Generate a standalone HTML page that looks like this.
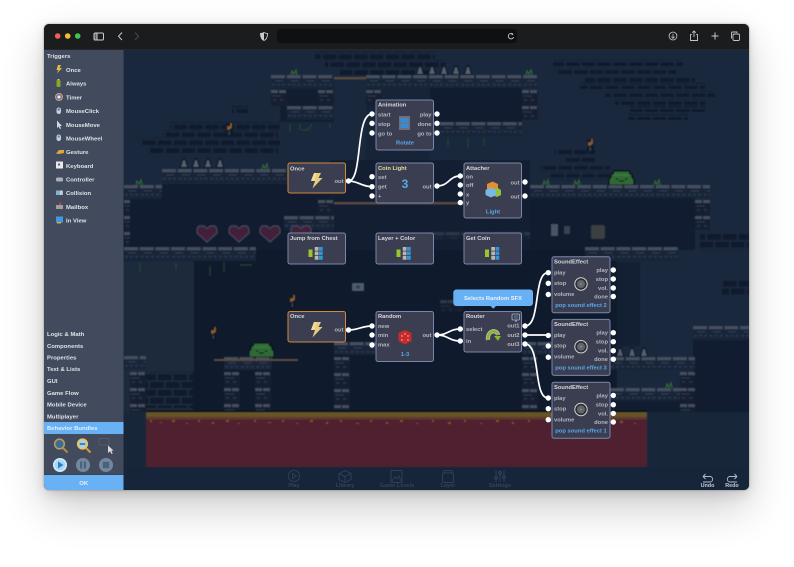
<!DOCTYPE html>
<html><head><meta charset="utf-8"><style>
html,body{margin:0;padding:0;background:#fff;width:794px;height:567px;overflow:hidden}
#w{position:absolute;left:44px;top:24px;width:705px;height:466px;border-radius:5px;box-shadow:0 18px 42px rgba(0,0,0,.2),0 4px 12px rgba(0,0,0,.12),0 0 2px rgba(0,0,0,.35)}
svg{position:absolute;left:0;top:0;filter:blur(.28px)}
#bg{filter:blur(.55px)}
text{font-family:"Liberation Sans",sans-serif;font-weight:700;font-size:5.8px;letter-spacing:0}
.s{fill:#dfe2e8;font-size:5.9px;letter-spacing:.03px}
.t{fill:#d6d8dd}
.p{fill:#b3b7c2}
.b{fill:#5aa9ec;text-anchor:middle}
.r{text-anchor:end}
.d{fill:#33435a;text-anchor:middle;font-size:5.6px}
.w{fill:none;stroke:#fff;stroke-width:1.7;stroke-linecap:round}
.n{fill:#3a3e50;stroke:#7b87aa;stroke-width:1}
.o{fill:#3a3e50;stroke:#d08a3c;stroke-width:1}
.i{fill:none;stroke:#c9ced6;stroke-width:1}
.m{fill:none;stroke:#2f3e55;stroke-width:1}
</style></head><body>
<div id="w"></div>
<svg width="794" height="567" viewBox="0 0 794 567">
<defs>
<clipPath id="win"><path d="M44 29a5 5 0 0 1 5-5H744a5 5 0 0 1 5 5V485a5 5 0 0 1-5 5H49a5 5 0 0 1-5-5Z"/></clipPath>
<pattern id="plat" width="15.7" height="14" patternUnits="userSpaceOnUse">
<rect width="15.7" height="14" fill="#182438"/>
<rect x="0" y="0" width="14" height="3.4" fill="#454e5e"/>
<rect x="4" y="5.4" width="8" height="1" fill="#374356"/>
<rect x="1" y="8.5" width="3" height="2.4" fill="#263348"/><rect x="6" y="8.5" width="3" height="2.4" fill="#263348"/><rect x="11" y="8.5" width="3" height="2.4" fill="#263348"/>
</pattern>
<pattern id="col" width="16" height="16" patternUnits="userSpaceOnUse">
<rect width="16" height="16" fill="#151f31"/>
<rect x="0" y="0" width="7" height="3.2" fill="#454e5e"/><rect x="8" y="0" width="7" height="3.2" fill="#454e5e"/>
<rect x="1" y="5.5" width="9" height="1" fill="#323e52"/>
<rect x="2" y="9" width="3" height="2" fill="#263348"/><rect x="9" y="9" width="3" height="2" fill="#263348"/>
</pattern>
<pattern id="wall" width="31.4" height="15.6" patternUnits="userSpaceOnUse">
<rect x="1" y="0" width="13.4" height="5.8" fill="#0f1a2c"/><rect x="16.7" y="0" width="13.4" height="5.8" fill="#0f1a2c"/>
<rect x="9" y="7.8" width="13.4" height="5.8" fill="#0f1a2c"/><rect x="24.7" y="7.8" width="6.7" height="5.8" fill="#0f1a2c"/><rect x="0" y="7.8" width="6.7" height="5.8" fill="#0f1a2c"/>
</pattern>
<g id="spike"><path d="M0 11 L1.5 8 L3.5 1 L6.5 1 L8.5 8 L10 11Z" fill="#111a2a"/><path d="M2 10 L4.2 3 L5.8 3 L8 10Z" fill="#565f6e"/></g>
<g id="bolt"><path d="M4.5 0H11.5L9 5H13L3 15.500L5.500 8H1.500Z" fill="#e6cd7e"/><path d="M5 8H1.500L4.500 0H7Z" fill="#efdc9c"/></g>
<g id="bun"><rect x="0" y="2" width="3.200" height="6" fill="#9ac62c"/><rect x="5" y="0" width="3" height="3" fill="#b9b6ad"/><rect x="5" y="3.600" width="3" height="3" fill="#b9b6ad"/><rect x="5" y="7.200" width="3" height="3" fill="#b9b6ad"/><rect x="8.400" y="0" width="3" height="3" fill="#2f95d8"/><rect x="8.400" y="3.600" width="3" height="3" fill="#2f95d8"/><rect x="8.400" y="7.200" width="3" height="3" fill="#2f95d8"/></g>
<g id="spk"><circle r="6.200" fill="#2c2f38" stroke="#d5d3c8" stroke-width="1"/><circle r="4" fill="#62666c"/><circle r=".8" fill="#9a9da0"/></g>
<g id="slime"><path d="M0 16V10L2 8V5L5 3V1H22V3L25 5V8L27 10V16Z" fill="#0d1522"/><path d="M1.500 15.500V10.500L3.500 8.500V6L6 4.500V2.500H21V4.500L23.500 6V8.500L25.500 10.500V15.500Z" fill="#2f6a35"/><rect x="6" y="5" width="15" height="2" fill="#3a7840"/><rect x="8" y="9.500" width="2.400" height="1" fill="#0f2014"/><rect x="17" y="9.500" width="2.400" height="1" fill="#0f2014"/><rect x="11" y="11.500" width="5" height="1" fill="#0f2014"/></g>
<g id="torch"><rect x="-3" y="-5" width="7" height="14" fill="#0f1828" opacity=".8"/><path d="M-2-2 1-2 1-5 3-5 3 0 0 2-2 2Z" fill="#8a5a2a"/><rect x="-.5" y="3" width="1.500" height="4" fill="#3d4658"/></g>
<g id="heart"><path d="M-8-6H-3L0-3.500 3-6H8L10-3V1L0 10-10 1V-3Z" fill="#43203a" stroke="#43475a" stroke-width="1.400"/></g>
<g id="grass"><path d="M0 5 1 1 3 4 5 0 6 5" fill="none" stroke="#2f6a33" stroke-width="1.200"/></g>
</defs>

<g clip-path="url(#win)">
<rect x="44" y="24" width="705" height="466" fill="#1a283d"/>
<g id="bg">
<rect x="110" y="40" width="660" height="470" fill="#1a283d"/>
<path d="M124 198H162V184H330V250H110V198Z" fill="#111c30"/>
<path d="M193 250H617V412H193Z" fill="#0f1a2d"/>
<path d="M330 160H530V250H330Z" fill="#131e32"/>
<path d="M530 198H695V250H530Z" fill="#111c30"/>
<path d="M280 88H334V122H280Z" fill="#121d31"/>
<path d="M430 86H522V122H430Z" fill="#111c30"/>
<path d="M366 88H430V160H366Z" fill="#162338"/>
<path d="M693 340H770V412H693Z" fill="#111c30"/>
<path d="M617 262H640V346H617Z" fill="#131f33"/>
<path d="M110 370H146V412H110Z" fill="#111c30"/>
<path d="M610 400H693V412H610Z" fill="#111c30"/>
<rect x="110" y="262" width="84" height="150" fill="#1c2a3c"/>
<rect x="110" y="412" width="660" height="55" fill="#18263a"/>
<rect x="110" y="467" width="660" height="43" fill="#17253a"/>
<rect x="193" y="250" width="60" height="12" fill="#0f1a2d"/>
<g fill="url(#wall)">
<rect x="232" y="106" width="16" height="7"/>
<rect x="170" y="122" width="110" height="7"/><rect x="163" y="130" width="115" height="7"/><rect x="140" y="138" width="140" height="7"/><rect x="148" y="146" width="130" height="7"/>
<rect x="315" y="52" width="120" height="7"/><rect x="325" y="60" width="120" height="7"/><rect x="340" y="68" width="90" height="7"/>
<rect x="553" y="60" width="130" height="6"/><rect x="556" y="68" width="120" height="6"/><rect x="585" y="76" width="110" height="6"/><rect x="580" y="83" width="125" height="6"/><rect x="605" y="91" width="110" height="6"/><rect x="615" y="99" width="90" height="6"/><rect x="630" y="106" width="75" height="6"/><rect x="628" y="114" width="60" height="6"/>
<rect x="555" y="150" width="40" height="6"/><rect x="565" y="158" width="30" height="6"/><rect x="540" y="166" width="70" height="6"/><rect x="550" y="174" width="60" height="6"/>
<rect x="145" y="372" width="50" height="36"/>
<rect x="700" y="232" width="49" height="18"/><rect x="722" y="280" width="27" height="16"/>
</g>
<rect x="193" y="372" width="30" height="38" fill="#0f1a2d"/>
<rect transform="translate(271 75)" width="63" height="14" fill="url(#plat)"/>
<rect transform="translate(271 90)" width="16" height="16" fill="url(#col)"/>
<rect transform="translate(318 90)" width="16" height="16" fill="url(#col)"/>
<rect transform="translate(287 106)" width="47" height="14" fill="url(#plat)"/>
<rect transform="translate(366 75)" width="172" height="13" fill="url(#plat)"/>
<rect transform="translate(366 90)" width="16" height="16" fill="url(#col)"/>
<rect transform="translate(522 90)" width="16" height="30" fill="url(#col)"/>
<rect transform="translate(440 122)" width="82" height="14" fill="url(#plat)"/>
<rect transform="translate(162 169)" width="125" height="14" fill="url(#plat)"/>
<rect transform="translate(124 185)" width="38" height="14" fill="url(#plat)"/>
<rect transform="translate(124 200)" width="6" height="48" fill="url(#col)"/>
<rect transform="translate(318 200)" width="16" height="32" fill="url(#col)"/>
<rect transform="translate(284 216)" width="50" height="14" fill="url(#plat)"/>
<rect transform="translate(530 185)" width="180" height="13" fill="url(#plat)"/>
<rect transform="translate(695 200)" width="15" height="30" fill="url(#col)"/>
<rect transform="translate(124 247)" width="132" height="14" fill="url(#plat)"/>
<rect transform="translate(585 247)" width="94" height="14" fill="url(#plat)"/>
<rect transform="translate(693 326)" width="56" height="14" fill="url(#plat)"/>
<rect transform="translate(610 357)" width="85" height="13" fill="url(#plat)"/>
<rect transform="translate(610 388)" width="70" height="13" fill="url(#plat)"/>
<rect transform="translate(680 372)" width="15" height="40" fill="url(#col)"/>
<rect transform="translate(124 356)" width="22" height="13" fill="url(#plat)"/>
<rect transform="translate(130 372)" width="16" height="40" fill="url(#col)"/>
<rect transform="translate(224 357)" width="48" height="13" fill="url(#plat)"/>
<rect transform="translate(224 372)" width="16" height="40" fill="url(#col)"/>
<rect transform="translate(255 372)" width="16" height="40" fill="url(#col)"/>
<rect transform="translate(334 342)" width="42" height="13" fill="url(#plat)"/>
<rect transform="translate(334 357)" width="16" height="55" fill="url(#col)"/>
<rect transform="translate(522 342)" width="30" height="13" fill="url(#plat)"/>
<rect transform="translate(522 357)" width="16" height="55" fill="url(#col)"/>
<rect transform="translate(440 300)" width="24" height="12" fill="url(#col)" opacity=".6"/>
<rect transform="translate(430 232)" width="100" height="8" fill="url(#plat)" opacity=".5"/>
<rect x="334" y="77" width="32" height="2.400" fill="#5a4a3c"/>
<rect x="334" y="202" width="130" height="2.400" fill="#5c4c3e"/>
<rect x="214" y="359" width="84" height="2" fill="#5e4d3e"/>
<use href="#spike" x="179" y="157"/><use href="#spike" x="191" y="157"/><use href="#spike" x="203" y="157"/><use href="#spike" x="215" y="157"/>
<use href="#spike" x="415" y="64"/><use href="#spike" x="427" y="64"/><use href="#spike" x="439" y="64"/><use href="#spike" x="451" y="64"/><use href="#spike" x="463" y="64"/>
<use href="#spike" x="615" y="346"/><use href="#spike" x="627" y="346"/><use href="#spike" x="639" y="346"/>
<use href="#slime" x="608" y="169"/><use href="#slime" x="248" y="341"/>
<use href="#torch" x="229" y="128"/><use href="#torch" x="590" y="144"/><use href="#torch" x="292" y="300"/><use href="#torch" x="213" y="332"/>
<use href="#heart" x="207" y="232"/><use href="#heart" x="239" y="232"/><use href="#heart" x="270" y="232"/><use href="#heart" x="301" y="232"/>
<use href="#grass" x="291" y="70"/><use href="#grass" x="262" y="164"/><use href="#grass" x="136" y="180"/><use href="#grass" x="526" y="70"/><use href="#grass" x="543" y="180"/><use href="#grass" x="574" y="180"/><use href="#grass" x="654" y="180"/><use href="#grass" x="337" y="337"/><use href="#grass" x="666" y="383"/>
<path d="M290 124V132M300 124V130M312 124L308 130H302M330 124V128M448 138V146M468 138V148M484 138V146M140 263V272M176 263V270M210 266V276M224 262V272M240 265H252" stroke="#22492e" stroke-width="1.200" fill="none"/>
<rect x="551" y="224" width="7" height="12" fill="#4c5464"/><rect x="564" y="226" width="6" height="8" fill="#3a4252"/><rect x="591" y="225" width="14" height="14" rx="2" fill="#3c3f42"/>
<rect x="352" y="283" width="12" height="8" rx="1" fill="#4d5c6d"/><circle cx="358" cy="287" r="1.600" fill="#2a3a4e"/>
<path d="M466 232 L466 240 L472 244Z" fill="#394252"/>
<rect x="146" y="410.500" width="501" height="2" fill="#0b0f16"/>
<rect x="146" y="412" width="501" height="55" fill="#4f2130"/>
<rect x="146" y="412" width="501" height="5" fill="#665429"/>
<rect x="146" y="417" width="501" height="2.500" fill="#5d3a2c"/>
<g fill="#7a5a24"><rect x="150" y="420" width="2" height="2"/><rect x="160" y="422" width="2" height="1"/><rect x="172" y="420" width="3" height="2"/><rect x="186" y="423" width="2" height="1"/><rect x="198" y="420" width="2" height="2"/><rect x="212" y="422" width="2" height="2"/><rect x="226" y="420" width="3" height="2"/><rect x="238" y="423" width="2" height="1"/><rect x="254" y="420" width="2" height="2"/><rect x="268" y="422" width="3" height="1"/><rect x="282" y="420" width="2" height="2"/><rect x="296" y="423" width="2" height="1"/><rect x="310" y="420" width="3" height="2"/><rect x="326" y="422" width="2" height="2"/><rect x="340" y="420" width="2" height="2"/><rect x="356" y="423" width="3" height="1"/><rect x="370" y="420" width="2" height="2"/><rect x="386" y="422" width="2" height="2"/><rect x="400" y="420" width="3" height="2"/><rect x="416" y="423" width="2" height="1"/><rect x="432" y="420" width="2" height="2"/><rect x="448" y="422" width="3" height="2"/><rect x="464" y="420" width="2" height="2"/><rect x="480" y="423" width="2" height="1"/><rect x="496" y="420" width="3" height="2"/><rect x="512" y="422" width="2" height="2"/><rect x="528" y="420" width="2" height="2"/><rect x="620" y="421" width="3" height="2"/><rect x="634" y="423" width="2" height="1"/></g>
</g>
</g>

<path d="M44 50V29a5 5 0 0 1 5-5H744a5 5 0 0 1 5 5V50Z" fill="#1b1c1e"/>
<rect x="44" y="49.200" width="705" height="1" fill="#2a2c30"/>
<circle cx="57.700" cy="36" r="2.800" fill="#ee5f58"/><circle cx="67.700" cy="36" r="2.800" fill="#f7bb2f"/><circle cx="77.700" cy="36" r="2.800" fill="#3ac74a"/>
<rect x="94" y="33" width="9.500" height="7" rx="1.300" class="i" stroke-width=".9"/><path d="M97 33V40" class="i" stroke-width=".9"/><rect x="94.500" y="33.500" width="2.500" height="6" fill="#c9ced6" opacity=".4"/>
<path d="M122 32.500 118.500 36.300 122 40" class="i"/><path d="M135 32.500 138.500 36.300 135 40" fill="none" stroke="#4a4c50" stroke-width="1"/>
<path d="M264 32.500C262.500 33.300 261.300 33.500 260.500 33.500C260.500 37 261.500 39.500 264 40.500C266.500 39.500 267.500 37 267.500 33.500C266.700 33.500 265.500 33.300 264 32.500Z" fill="none" stroke="#c9ced6" stroke-width=".9"/><path d="M264 32.500V40.500C261.500 39.500 260.500 37 260.500 33.500C261.300 33.500 262.500 33.300 264 32.500Z" fill="#c9ced6"/>
<rect x="277" y="29" width="240" height="14" rx="3" fill="#0f1011"/>
<path d="M513 34.300A2.700 2.700 0 1 0 513.600 37" fill="none" stroke="#c2c5ca" stroke-width=".9"/><path d="M511.800 32.800 513.600 34.600 511.500 35.300Z" fill="#c2c5ca"/>
<circle cx="673" cy="36" r="3.900" fill="none" stroke="#b9bcc2" stroke-width=".9"/><path d="M673 33.700V38M671.400 36.700 673 38.300 674.600 36.700" fill="none" stroke="#b9bcc2" stroke-width=".8"/>
<path d="M691.700 34.500H690.500V40.500H697.500V34.500H696.300M694 37V31M692.200 32.700 694 31 695.800 32.700" fill="none" stroke="#c4c7cc" stroke-width=".9"/>
<path d="M715 32.500V39.500M711.500 36H718.500" stroke="#c4c7cc" stroke-width="1"/>
<rect x="733" y="34" width="6.500" height="6.500" rx="1.200" fill="none" stroke="#c4c7cc" stroke-width=".9"/><path d="M732 38H731.500V33A1 1 0 0 1 732.500 32H737V33" fill="none" stroke="#c4c7cc" stroke-width=".9"/>

<path d="M44 50H123.500V490H49a5 5 0 0 1-5-5Z" fill="#424b5d"/>
<text x="47" y="57.800" class="s">Triggers</text>
<path d="M58 65H61L59.500 68H62L57 73.500L58.300 70H56.500Z" fill="#e8b93a"/>
<rect x="56.500" y="80" width="4" height="7" rx="1" fill="#8aa52a"/><rect x="57.500" y="79" width="2" height="1" fill="#c6c9a0"/>
<circle cx="59" cy="97" r="3.500" fill="#6270d8" stroke="#e0a33e"/><circle cx="59" cy="97" r="1.500" fill="#f2eede"/>
<rect x="56.500" y="107.500" width="4.500" height="6.500" rx="2.200" fill="#c4d0de"/><rect x="57.500" y="108.500" width="2.500" height="2" fill="#6a7ca0"/>
<path d="M57 120.500V128L58.500 126.500 60 129 61 128.500 60 126 62 126Z" fill="#d0d6de"/>
<rect x="56.500" y="134.500" width="4.500" height="6.500" rx="2.200" fill="#c4d0de"/><rect x="57.700" y="135.500" width="2" height="2" fill="#6a7ca0"/>
<path d="M56 153.500 59 150H64V153L59 154Z" fill="#e0a83a"/>
<rect x="56" y="161.500" width="7" height="7" fill="#e8e8e8"/><rect x="58" y="163.500" width="2" height="2" fill="#5a6068"/>
<rect x="56" y="177.500" width="7" height="4" rx="1.500" fill="#aab0ba"/>
<rect x="56" y="190.500" width="3.300" height="4.500" fill="#7fb2d8"/><rect x="59.500" y="190.500" width="3.300" height="4.500" fill="#c8ced6"/>
<rect x="56" y="205" width="7" height="4" fill="#9aa0a8"/><rect x="59" y="202.500" width="2" height="2.500" fill="#d63a3a"/>
<rect x="56" y="216.500" width="7" height="6" fill="#3f98e0"/><rect x="57" y="222" width="4" height="1.500" fill="#e0a83a"/>
<text x="66" y="72" class="s">Once</text><text x="66" y="85.700" class="s">Always</text><text x="66" y="99.400" class="s">Timer</text><text x="66" y="113" class="s">MouseClick</text><text x="66" y="126.800" class="s">MouseMove</text><text x="66" y="140.500" class="s">MouseWheel</text><text x="66" y="154.200" class="s">Gesture</text><text x="66" y="167.800" class="s">Keyboard</text><text x="66" y="181.500" class="s">Controller</text><text x="66" y="195.200" class="s">Collision</text><text x="66" y="208.900" class="s">Mailbox</text><text x="66" y="222.600" class="s">In View</text>
<text x="47" y="336" class="s">Logic &amp; Math</text><text x="47" y="347.800" class="s">Components</text><text x="47" y="359.500" class="s">Properties</text><text x="47" y="371" class="s">Text &amp; Lists</text><text x="47" y="383" class="s">GUI</text><text x="47" y="394.800" class="s">Game Flow</text><text x="47" y="406.500" class="s">Mobile Device</text><text x="47" y="418.300" class="s">Multiplayer</text>
<rect x="44" y="422" width="79.500" height="12" fill="#69b1f5"/>
<text x="47" y="430" class="s" style="fill:#e6f1fc">Behavior Bundles</text>
<circle cx="59.500" cy="444" r="4.800" fill="#3b6d91" stroke="#b59a62" stroke-width="1.600"/><path d="M63 448 67.500 452.500" stroke="#b08a4e" stroke-width="2"/>
<circle cx="82.500" cy="444" r="4.800" fill="#9fd2ec" stroke="#eec45a" stroke-width="1.600"/><rect x="79.800" y="443.300" width="5.400" height="1.400" fill="#2a5d80"/><path d="M86 448 90.500 452.500" stroke="#d99a3a" stroke-width="2"/>
<rect x="99" y="438.500" width="10" height="6.500" rx="1" fill="none" stroke="#556070" stroke-width=".8"/>
<path d="M108 445.500V453L110 451.200 111.500 454 112.700 453.400 111.300 450.700 113.500 450.500Z" fill="#d8dce2"/>
<circle cx="60" cy="465" r="7" fill="#cfeafb"/><circle cx="60" cy="465" r="5.400" fill="#a9d8f6"/><path d="M58 461.500V468.500L63.500 465Z" fill="#2f7fc0"/>
<circle cx="83" cy="465" r="7" fill="#74879c"/><rect x="80" y="461.500" width="2.200" height="7" fill="#47637f"/><rect x="83.800" y="461.500" width="2.200" height="7" fill="#47637f"/>
<circle cx="106" cy="465" r="7" fill="#74879c"/><rect x="102.800" y="461.800" width="6.400" height="6.400" fill="#47637f"/>
<path d="M44 475H123.500V490H49a5 5 0 0 1-5-5Z" fill="#69b1f5"/>
<rect x="44" y="474" width="79.500" height="1" fill="#3a4352"/>
<text x="83.700" y="484.800" text-anchor="middle" class="s" style="fill:#e6f1fc">OK</text>

<circle cx="294" cy="476" r="5.600" class="m"/><path d="M292.500 473.500V478.500L296.500 476Z" class="m" stroke-width=".8"/>
<path d="M345 470.500 351 473.500V479.500L345 482.500 339 479.500V473.500ZM339 473.500 345 476.500 351 473.500M345 476.500V482.500" class="m"/>
<rect x="391" y="470.500" width="11" height="12" class="m"/><path d="M392 481 395 477 397 479 399 476 401 481" class="m" stroke-width=".8"/>
<rect x="442.500" y="473" width="11" height="9.500" rx="1" class="m"/><path d="M444 473V470.500H452V473" class="m"/>
<path d="M496 470V482M500 470V482M504 470V482" class="m"/><circle cx="496" cy="478" r="1.500" class="m"/><circle cx="500" cy="473" r="1.500" class="m"/><circle cx="504" cy="477" r="1.500" class="m"/>
<text x="294" y="487" class="d">Play</text><text x="345" y="487" class="d">Library</text><text x="397" y="487" class="d">Game Levels</text><text x="448" y="487" class="d">Layer</text><text x="500" y="487" class="d">Settings</text>
<path d="M703 476.500H710C713.500 476.500 713.500 482 710 482H703M703 476.500 705.500 474M703 476.500 705.500 479" fill="none" stroke="#b5bcc6" stroke-width=".9"/>
<path d="M737 476.500H730C726.500 476.500 726.500 482 730 482H737M737 476.500 734.500 474M737 476.500 734.500 479" fill="none" stroke="#b5bcc6" stroke-width=".9"/>
<text x="707.500" y="486.800" style="fill:#c4c9d2;font-size:5.400px" text-anchor="middle">Undo</text>
<text x="732" y="486.800" style="fill:#c4c9d2;font-size:5.400px" text-anchor="middle">Redo</text>

<path class="w" d="M348.500 181C363 181 355 114 372 114"/>
<path class="w" d="M348.500 181C358 181 362 186.700 372 186.700"/>
<path class="w" d="M437 186C449 186 449 176 460 176"/>
<path class="w" d="M348.500 330C358 330 362 326 372 326"/>
<path class="w" d="M437 335C448 335 449 329 460 329"/>
<path class="w" d="M437 335C448 335 449 341 460 341"/>
<path class="w" d="M525 326C541 326 533 272.700 548 272.700"/>
<path class="w" d="M525 335H548"/>
<path class="w" d="M525 344C541 344 533 398 548 398"/>

<rect x="288" y="163" width="57.500" height="30" rx="2" class="o"/>
<text x="290" y="170.300" class="t">Once</text>
<use href="#bolt" x="309.500" y="173"/>
<text x="343.500" y="183" class="p r">out</text>

<rect x="376" y="100" width="57.500" height="50" rx="2" class="n"/>
<text x="378" y="106.500" class="t">Animation</text>
<text x="378" y="116.500" class="p">start</text><text x="378" y="125.800" class="p">stop</text><text x="378" y="135.300" class="p">go to</text>
<text x="431.500" y="116.500" class="p r">play</text><text x="431.500" y="125.800" class="p r">done</text><text x="431.500" y="135.300" class="p r">go to</text>
<rect x="399" y="116" width="11" height="14" fill="#6d7078"/><rect x="400.500" y="118" width="8" height="4.500" fill="#3a8bd4"/><rect x="400.500" y="123.500" width="8" height="4.500" fill="#3a8bd4"/>
<text x="405" y="144.500" class="b">Rotate</text>

<rect x="376" y="163" width="57.500" height="40" rx="2" class="n"/>
<text x="378" y="169.800" class="t" style="fill:#e3dd9c">Coin Light</text>
<text x="378" y="179" class="p">set</text><text x="378" y="188.500" class="p">get</text><text x="378" y="198" class="p">+</text>
<text x="431.500" y="188.500" class="p r">out</text>
<text x="405" y="188" style="fill:#5aa9ec;font-size:12px" text-anchor="middle">3</text>

<rect x="464" y="163" width="57.500" height="55" rx="2" class="n"/>
<text x="466" y="169.800" class="t">Attacher</text>
<text x="466" y="178.500" class="p">on</text><text x="466" y="187" class="p">off</text><text x="466" y="196.500" class="p">x</text><text x="466" y="204.500" class="p">y</text>
<text x="519.500" y="184.500" class="p r">out</text><text x="519.500" y="198.500" class="p r">out</text>
<path d="M487 184 492.500 181.500 498 184V189L492.500 192 487 189Z" fill="#e28f33"/><path d="M492 190 497 187.500 501 190V195L497 197 492 195Z" fill="#97bf3c"/><path d="M485.500 190 491 187.500 496 190V195L491 197.500 485.500 195Z" fill="#79b7e4"/>
<text x="493" y="213.500" class="b">Light</text>

<rect x="288" y="233" width="57.500" height="31" rx="2" class="n"/>
<text x="290" y="239.800" class="t">Jump from Chest</text><use href="#bun" transform="translate(308.500 247) scale(1.250)"/>
<rect x="376" y="233" width="57.500" height="31" rx="2" class="n"/>
<text x="378" y="239.800" class="t">Layer + Color</text><use href="#bun" transform="translate(396.500 247) scale(1.250)"/>
<rect x="464" y="233" width="57.500" height="31" rx="2" class="n"/>
<text x="466" y="239.800" class="t">Get Coin</text><use href="#bun" transform="translate(485 247) scale(1.250)"/>

<rect x="288" y="311.500" width="57.500" height="30.500" rx="2" class="o"/>
<text x="290" y="318" class="t">Once</text><use href="#bolt" x="309.500" y="322"/>
<text x="343.500" y="331.500" class="p r">out</text>

<rect x="376" y="311.500" width="57.500" height="50" rx="2" class="n"/>
<text x="378" y="318" class="t">Random</text>
<text x="378" y="328" class="p">new</text><text x="378" y="337" class="p">min</text><text x="378" y="346.500" class="p">max</text>
<text x="431.500" y="337" class="p r">out</text>
<path d="M398.500 333 405 330 411.500 333V341L405 344.500 398.500 341Z" fill="#c92a2a"/><g fill="#f0c8c8"><circle cx="402" cy="336" r=".7"/><circle cx="405" cy="334" r=".7"/><circle cx="408" cy="336" r=".7"/><circle cx="402" cy="340" r=".7"/><circle cx="408" cy="340" r=".7"/></g>
<text x="405" y="356" class="b">1-3</text>

<rect x="464" y="311.500" width="57.500" height="40.500" rx="2" class="n"/>
<text x="466" y="318" class="t">Router</text>
<text x="466" y="331" class="p">select</text><text x="466" y="343" class="p">in</text>
<text x="519.500" y="327.500" class="p r">out1</text><text x="519.500" y="336.800" class="p r">out2</text><text x="519.500" y="346" class="p r">out3</text>
<path d="M488 340C487 330 497 329 498 335" fill="none" stroke="#c4c4b8" stroke-width="4.200"/><path d="M488 340C487 330 497 329 498 335" fill="none" stroke="#86b52e" stroke-width="2.600"/><path d="M494 336H501L498 341Z" fill="#86b52e"/>
<rect x="512" y="314" width="7.500" height="6" rx="1" fill="none" stroke="#a8b4ca" stroke-width=".8"/><path d="M514 316H518M514 318H518M515 320.300 516 321.800 517 320.300" stroke="#a8b4ca" stroke-width=".6" fill="none"/>

<rect x="453.300" y="289.500" width="79.700" height="16.500" rx="3" fill="#69b1f5"/><path d="M490.500 306H496L493.200 308.800Z" fill="#69b1f5"/>
<text x="493" y="300.200" style="fill:#e8f2fc" text-anchor="middle">Selects Random SFX</text>

<rect x="552" y="256.700" width="58" height="56" rx="2" class="n"/>
<text x="554" y="263.300" class="t">SoundEffect</text>
<text x="554" y="274.500" class="p">play</text><text x="554" y="285" class="p">stop</text><text x="554" y="296" class="p">volume</text>
<text x="608" y="272" class="p r">play</text><text x="608" y="281" class="p r">stop</text><text x="608" y="290" class="p r">vol.</text><text x="608" y="298.500" class="p r">done</text>
<use href="#spk" x="581" y="284"/>
<text x="581" y="307" class="b">pop sound effect 2</text>
<rect x="552" y="319.400" width="58" height="56" rx="2" class="n"/>
<text x="554" y="326" class="t">SoundEffect</text>
<text x="554" y="337.200" class="p">play</text><text x="554" y="347.700" class="p">stop</text><text x="554" y="358.700" class="p">volume</text>
<text x="608" y="334.700" class="p r">play</text><text x="608" y="343.700" class="p r">stop</text><text x="608" y="352.700" class="p r">vol.</text><text x="608" y="361.200" class="p r">done</text>
<use href="#spk" x="581" y="346.700"/>
<text x="581" y="369.700" class="b">pop sound effect 3</text>
<rect x="552" y="382.200" width="58" height="56" rx="2" class="n"/>
<text x="554" y="388.800" class="t">SoundEffect</text>
<text x="554" y="400" class="p">play</text><text x="554" y="410.500" class="p">stop</text><text x="554" y="421.500" class="p">volume</text>
<text x="608" y="397.500" class="p r">play</text><text x="608" y="406.500" class="p r">stop</text><text x="608" y="415.500" class="p r">vol.</text><text x="608" y="424" class="p r">done</text>
<use href="#spk" x="581" y="409.500"/>
<text x="581" y="432.500" class="b">pop sound effect 1</text>

<g fill="#fff">
<circle cx="348.500" cy="181" r="2.700"/><circle cx="372" cy="114" r="2.700"/><circle cx="372" cy="123.300" r="2.700"/><circle cx="372" cy="133" r="2.700"/><circle cx="437" cy="114" r="2.700"/><circle cx="437" cy="123.300" r="2.700"/><circle cx="437" cy="133" r="2.700"/>
<circle cx="372" cy="176.700" r="2.700"/><circle cx="372" cy="186.700" r="2.700"/><circle cx="372" cy="196" r="2.700"/><circle cx="437" cy="186" r="2.700"/>
<circle cx="460.300" cy="176" r="2.700"/><circle cx="460.300" cy="185" r="2.700"/><circle cx="460.300" cy="194" r="2.700"/><circle cx="460.300" cy="202.600" r="2.700"/><circle cx="525" cy="182" r="2.700"/><circle cx="525" cy="196" r="2.700"/>
<circle cx="348.500" cy="330" r="2.700"/><circle cx="372" cy="326" r="2.700"/><circle cx="372" cy="335" r="2.700"/><circle cx="372" cy="345" r="2.700"/><circle cx="437" cy="335" r="2.700"/>
<circle cx="460.300" cy="329" r="2.700"/><circle cx="460.300" cy="341" r="2.700"/><circle cx="525" cy="326" r="2.700"/><circle cx="525" cy="335" r="2.700"/><circle cx="525" cy="344" r="2.700"/>
<circle cx="548.300" cy="272.700" r="2.700"/><circle cx="548.300" cy="283.300" r="2.700"/><circle cx="548.300" cy="294.500" r="2.700"/><circle cx="613.300" cy="270" r="2.700"/><circle cx="613.300" cy="279" r="2.700"/><circle cx="613.300" cy="288" r="2.700"/><circle cx="613.300" cy="296.500" r="2.700"/>
<circle cx="548.300" cy="335.400" r="2.700"/><circle cx="548.300" cy="346" r="2.700"/><circle cx="548.300" cy="357.200" r="2.700"/><circle cx="613.300" cy="332.700" r="2.700"/><circle cx="613.300" cy="341.700" r="2.700"/><circle cx="613.300" cy="350.700" r="2.700"/><circle cx="613.300" cy="359.200" r="2.700"/>
<circle cx="548.300" cy="398" r="2.700"/><circle cx="548.300" cy="408.700" r="2.700"/><circle cx="548.300" cy="419.700" r="2.700"/><circle cx="613.300" cy="395.400" r="2.700"/><circle cx="613.300" cy="404.700" r="2.700"/><circle cx="613.300" cy="413.400" r="2.700"/><circle cx="613.300" cy="422" r="2.700"/>
</g>
</svg>
</body></html>
